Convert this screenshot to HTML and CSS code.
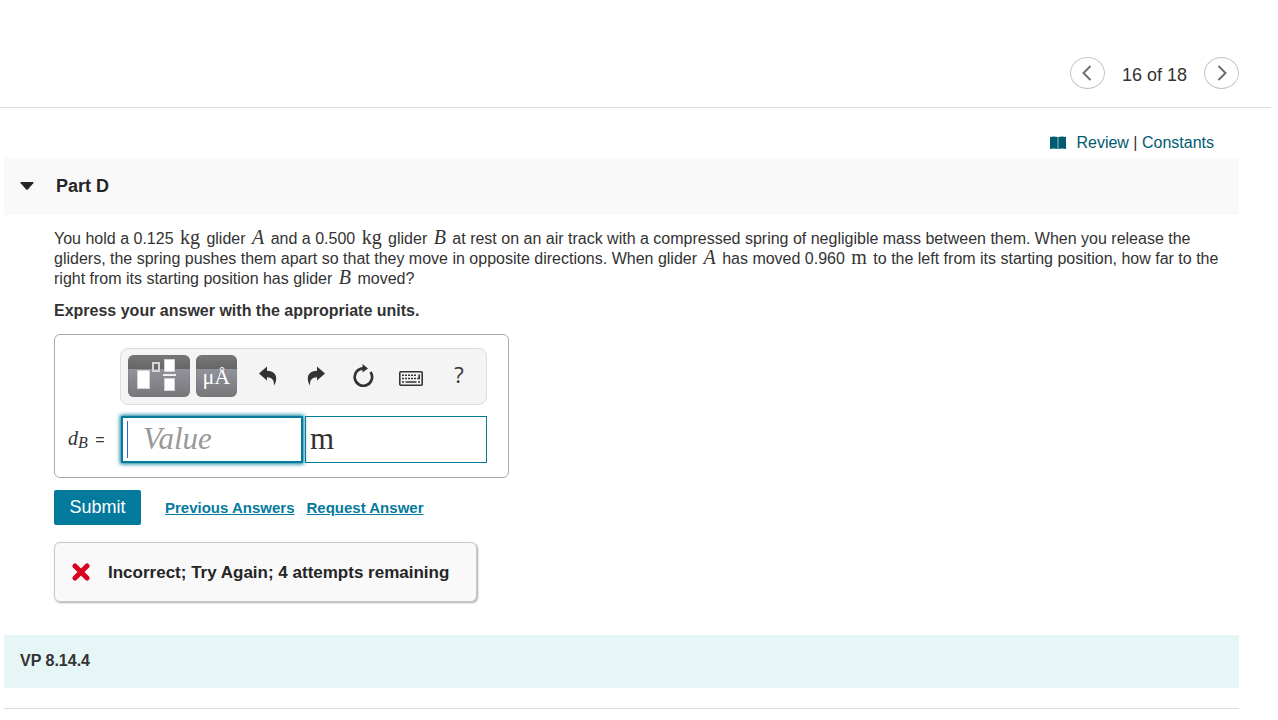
FILE: index.html
```
<!DOCTYPE html>
<html lang="en">
<head>
	<meta charset="UTF-8">
	<title>Part D</title>
	<link rel="stylesheet" href="styles.css">
</head>
<body>
	<header class="topbar">
		<nav class="pager" aria-label="Items">
			<button type="button" class="pager-btn" aria-label="Previous item">
				<svg width="12" height="16" viewBox="0 0 12 16"><path d="M9.500 1 2.500 8l7 7"/></svg>
			</button>
			<span class="pager-text">16 of 18</span>
			<button type="button" class="pager-btn" aria-label="Next item">
				<svg width="12" height="16" viewBox="0 0 12 16"><path d="M2.500 1l7 7-7 7"/></svg>
			</button>
		</nav>
	</header>

	<main class="content">
		<div class="resources">
			<svg class="book" width="16" height="14" viewBox="0 0 16 14"><path d="M0 1Q4-.2 7.700 1V13Q4 12 0 13ZM8.300 1Q12-.2 16 1V13Q12 12 8.300 13Z"/></svg>
			<span><a href="#">Review</a> | <a href="#">Constants</a></span>
		</div>

		<section class="part">
			<h2 class="part-head">
				<svg width="14" height="8" viewBox="0 0 14 8"><path d="M1.200 0h11.600q1.200.2.500 1.300L8 7.200Q7 8.200 6 7.200L.7 1.300Q0 .2 1.200 0Z"/></svg>
				Part D
			</h2>

			<div class="part-body">
				<p class="question">You hold a 0.125 <span class="math">kg</span> glider <i class="math">A</i> and a 0.500 <span class="math">kg</span> glider <i class="math">B</i> at rest on an air track with a compressed spring of negligible mass between them. When you release the gliders, the spring pushes them apart so that they move in opposite directions. When glider <i class="math">A</i> has moved 0.960 <span class="math">m</span> to the left from its starting position, how far to the right from its starting position has glider <i class="math">B</i> moved?</p>
				<p class="instruction">Express your answer with the appropriate units.</p>

				<form class="answer">
					<div class="answer-box">
						<div class="toolbar">
							<button type="button" class="key key-templates" aria-label="Templates">
								<svg width="62" height="42" viewBox="0 0 62 42">
									<path fill="#fff" stroke="#d4d4d4" d="M9.500 15.500h12v18h-12zM36.500 4.500h10v12h-10zM36.500 23.500h10v12h-10z"/>
									<path fill="none" stroke="#d4d4d4" stroke-width="2" d="M25 8h6v8h-6z"/>
									<path stroke="#eee" stroke-width="2" d="M35 20h13"/>
								</svg>
							</button>
							<button type="button" class="key key-units" aria-label="Symbols">μÅ</button>
							<button type="button" class="tool" aria-label="Undo">
								<svg width="18" height="20" viewBox="0 0 18 20"><path d="M0 7.500 8 .5v4.200c6.500.3 9.500 3.700 9.200 8.300-.2 3-1.200 5-2.200 6.500 0-4.800-1-8-7-8.200v3.200Z"/></svg>
							</button>
							<button type="button" class="tool" aria-label="Redo">
								<svg width="18" height="20" viewBox="0 0 18 20"><path d="M18 7.500 10 .5v4.200C3.500 5 .5 8.400.8 13c.2 3 1.200 5 2.200 6.500 0-4.800 1-8 7-8.200v3.200Z"/></svg>
							</button>
							<button type="button" class="tool" aria-label="Reset">
								<svg width="22" height="24" viewBox="0 0 22 24"><path fill="none" stroke="#333" stroke-width="2.700" d="M11.500 4.300A8.700 8.700 0 1 0 18.500 8"/><path d="M10.500 0 16 4.500l-5.500 4Z"/></svg>
							</button>
							<button type="button" class="tool" aria-label="Keyboard shortcuts">
								<svg width="24" height="20" viewBox="0 0 24 20">
									<rect x=".8" y="5.800" width="22.400" height="13.400" rx="1" fill="none" stroke="#333" stroke-width="1.600"/>
									<path fill="none" stroke="#333" stroke-width="1.600" stroke-dasharray="2 1" d="M3 9.300h15M3 12.500h15"/>
									<path fill="none" stroke="#333" stroke-width="1.600" d="M20.200 8.500v4h-2M3 16h2M6.500 16h11M19 16h2"/>
								</svg>
							</button>
							<button type="button" class="tool help" aria-label="Help">?</button>
						</div>
						<label class="answer-label" for="value"><i>d<sub>B</sub></i> =</label>
						<div class="fields">
							<div class="value-field">
								<span class="caret"></span>
								<input type="text" id="value" class="field" placeholder="Value">
							</div>
							<input type="text" class="field field-units" aria-label="Units" value="m">
						</div>
					</div>

					<div class="actions">
						<button type="submit" class="submit">Submit</button>
						<a href="#">Previous Answers</a>
						<a href="#">Request Answer</a>
					</div>
				</form>

				<div class="feedback">
					<svg width="18" height="18" viewBox="0 0 18 18"><path d="M3 3 15 15M15 3 3 15"/></svg>
					<span>Incorrect; Try Again; 4 attempts remaining</span>
				</div>
			</div>
		</section>

		<h2 class="next-part">VP 8.14.4</h2>
		<hr class="divider">
	</main>
</body>
</html>
```
FILE: styles.css
```
* {
	box-sizing: border-box;
}
body {
	margin: 0;
	background: #fff;
	color: #333;
	font: 16px/20px "Liberation Sans", Arial, sans-serif;
}
h2, p {
	margin: 0;
}
button {
	padding: 0;
	border: 0;
	background: none;
	color: #333;
	font-family: inherit;
}
svg {
	display: block;
	flex: none;
}

/* pager */
.topbar {
	margin-right: 7px;
	padding: 57px 32px 18px 0;
	border-bottom: 1px solid #ddd;
}
.pager {
	display: flex;
	justify-content: flex-end;
	align-items: center;
	gap: 17px;
}
.pager-btn {
	display: flex;
	justify-content: center;
	align-items: center;
	width: 35px;
	height: 32px;
	border: 1px solid #c4c4c4;
	border-radius: 50%;
}
.pager-btn path {
	fill: none;
	stroke: #6a7070;
	stroke-width: 2;
}
.pager-text {
	padding-top: 4px;
	font-size: 18px;
}

.content {
	margin: 0 39px 0 4px;
}
.resources {
	display: flex;
	justify-content: flex-end;
	align-items: center;
	gap: 10px;
	padding: 25px 25px 5px 0;
}
.resources a {
	color: #005a70;
	text-decoration: none;
}
.book {
	fill: #005a70;
}

/* part */
.part-head {
	display: flex;
	align-items: center;
	gap: 22px;
	height: 57px;
	padding: 0 16px 2px;
	background: #f9f9f9;
	color: #252525;
	font-size: 18px;
}
.part-head svg {
	fill: #252525;
}
.part-body {
	padding: 14px 0 33px 50px;
}
.math {
	margin: 0 2px;
	font-family: "Liberation Serif", "Times New Roman", serif;
	font-size: 20px;
	line-height: 16px;
}
.instruction {
	padding: 12px 0 13px;
	font-weight: bold;
}

/* answer box */
.answer-box {
	display: grid;
	grid-template-columns: 52px 367px;
	gap: 10px 0;
	width: max-content;
	padding: 13px 21px 13px 13px;
	border: 1px solid #aaa;
	border-radius: 6px;
}
.toolbar {
	grid-column: 2;
	display: flex;
	align-items: center;
	height: 57px;
	padding: 0 4px 2px 7px;
	border: 1px solid #ddd;
	border-radius: 8px;
	background: #f4f4f4;
}
.key {
	height: 42px;
	margin-right: 6px;
	border-radius: 6px;
	background: linear-gradient(#777 0, #666 14px, #92929c 14px, #77777b 100%);
	box-shadow: inset 0 0 1px #555;
}
.key-templates {
	width: 62px;
}
.key-units {
	width: 41px;
	padding-top: 3px;
	color: #fff;
	font: 22px "Liberation Serif", serif;
}
.tool {
	display: flex;
	justify-content: center;
	align-items: center;
	width: 48px;
	height: 42px;
	padding-left: 2px;
	fill: #333;
}
.help {
	padding-bottom: 4px;
	font: 22px "Open Sans", "Noto Sans", sans-serif;
}
.answer-label {
	align-self: center;
	padding-bottom: 2px;
}
.answer-label i {
	margin-right: 3px;
	font-family: "Liberation Serif", serif;
	font-size: 20px;
}
.answer-label sub {
	font-size: 16px;
	line-height: 0;
	vertical-align: -3px;
}
.fields {
	display: grid;
	grid-template-columns: 1fr 1fr;
	gap: 2px;
	padding: 1px 0 1px 1px;
}
.value-field {
	display: flex;
	align-items: center;
	padding-left: 4px;
	border: 2px solid #047a9c;
	box-shadow: 0 0 4px 1px #047a9c;
}
.caret {
	flex: none;
	width: 1px;
	height: 37px;
	background: #3a62c8;
}
.field {
	width: 100%;
	min-width: 0;
	height: 43px;
	padding: 0 0 2px 15px;
	border: 0;
	outline: 0;
	background: none;
	color: #333;
	font: 31px "Liberation Serif", "Times New Roman", serif;
}
.field::placeholder {
	color: #999;
	font-style: italic;
}
.field-units {
	height: 47px;
	padding: 0 4px 2px;
	border: 1px solid #047a9c;
}

.actions {
	display: flex;
	align-items: center;
	gap: 12px;
	padding: 12px 0 17px;
	font-size: 15px;
	font-weight: bold;
}
.actions a {
	color: #047a9c;
}
.submit {
	width: 87px;
	height: 35px;
	margin-right: 12px;
	border-radius: 2px;
	background: #047a9c;
	color: #fff;
	font-size: 18px;
}

.feedback {
	display: flex;
	align-items: center;
	gap: 18px;
	width: max-content;
	min-width: 423px;
	height: 60px;
	padding: 0 17px;
	border: 1px solid #c7c7c7;
	border-radius: 6px;
	background: #f9f9f9;
	box-shadow: 1px 1px 2px #aaa;
	color: #252525;
	font-size: 17px;
	font-weight: bold;
}
.feedback span {
	padding-top: 2px;
}
.feedback path {
	fill: none;
	stroke: #db0020;
	stroke-width: 5;
	stroke-linecap: round;
}

.next-part {
	padding: 16px 16px 17px;
	background: #e6f6f6;
	font-size: 16px;
}
.divider {
	margin: 20px 0 0;
	border: 0;
	border-top: 1px solid #ddd;
}
```
